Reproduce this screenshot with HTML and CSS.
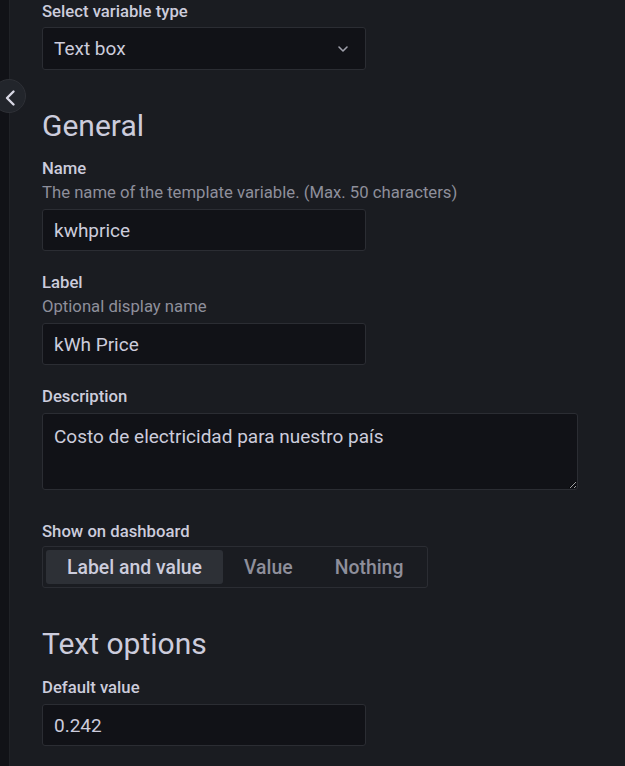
FILE: index.html
```html
<!DOCTYPE html>
<html lang="en">
<head>
<meta charset="utf-8">
<title>Variable editor</title>
<link rel="stylesheet" href="styles.css">
</head>
<body>
<div class="page">
  <div class="rail"></div>
  <button class="collapse" aria-label="Collapse">
    <svg width="32" height="32" viewBox="0 0 32 32"><path d="M20.5 11.5 L14 18 L20.5 24.5" fill="none" stroke="#d8d8e4" stroke-width="2.4" stroke-linecap="round" stroke-linejoin="round"/></svg>
  </button>
  <main class="main">
    <div class="field">
      <div class="label">Select variable type</div>
      <div class="select">
        <span>Text box</span>
        <svg class="caret" width="12" height="8" viewBox="0 0 12 8"><path d="M2 2 L6 6 L10 2" fill="none" stroke="#9fa0ab" stroke-width="1.6" stroke-linecap="round" stroke-linejoin="round"/></svg>
      </div>
    </div>

    <h2 class="heading">General</h2>

    <div class="field">
      <div class="label">Name</div>
      <div class="desc">The name of the template variable. (Max. 50 characters)</div>
      <input class="input" type="text" value="kwhprice">
    </div>

    <div class="field">
      <div class="label">Label</div>
      <div class="desc">Optional display name</div>
      <input class="input" type="text" value="kWh Price">
    </div>

    <div class="field">
      <div class="label">Description</div>
      <textarea class="textarea">Costo de electricidad para nuestro país</textarea>
    </div>

    <div class="field field-radio">
      <div class="label">Show on dashboard</div>
      <div class="radio">
        <span class="opt active">Label and value</span>
        <span class="opt">Value</span>
        <span class="opt">Nothing</span>
      </div>
    </div>

    <h2 class="heading heading-2">Text options</h2>

    <div class="field">
      <div class="label">Default value</div>
      <input class="input" type="text" value="0.242">
    </div>
  </main>
</div>
</body>
</html>
```
FILE: styles.css
```css
* { box-sizing: border-box; }
html, body {
  margin: 0;
  padding: 0;
  background: #1a1c21;
  color: #ccccdc;
  font-family: Roboto, "Liberation Sans", sans-serif;
  color-scheme: dark;
}
.page {
  position: relative;
  display: flex;
  min-height: 766px;
}
.rail {
  width: 10px;
  flex: 0 0 10px;
  background: #111217;
  border-right: 1px solid #202227;
}
.collapse {
  position: absolute;
  left: -8px;
  top: 79px;
  width: 34px;
  height: 34px;
  border-radius: 50%;
  background: #22252b;
  border: 1px solid #2e3036;
  padding: 0;
  display: block;
}
.collapse svg { display: block; }
.main {
  padding: 1px 0 0 32px;
  flex: 1;
}
.field { margin-bottom: 21px; }
.label {
  font-size: 16.7px;
  font-weight: 500;
  line-height: 22px;
  color: #ccccdc;
}
.desc {
  font-size: 16.7px;
  line-height: 22px;
  margin-top: 2px;
  color: #8e8f9b;
}
.select, .input, .textarea {
  display: block;
  margin-top: 5px;
  width: 324px;
  height: 43px;
  background: #111217;
  border: 1px solid #2b2d33;
  border-radius: 3px;
  color: #ccccdc;
  font-family: Roboto, "Liberation Sans", sans-serif;
  font-size: 19px;
  padding: 0 11px;
  outline: none;
}
.select {
  display: flex;
  align-items: center;
  justify-content: space-between;
  padding-right: 16px;
  margin-top: 4px;
}
.caret { margin-top: 1px; }
.input { height: 42px; }
.textarea {
  width: 536px;
  height: 77px;
  margin-top: 5px;
  padding: 11px 11px;
  line-height: 24px;
  resize: vertical;
}
.heading {
  font-size: 30px;
  font-weight: 400;
  line-height: 40px;
  margin: 36px 0 12px 0;
  color: #ccccdc;
}
.field-radio { margin-top: 31px; margin-bottom: 36px; }
.radio {
  display: inline-flex;
  margin-top: 3px;
  height: 42px;
  padding: 3px;
  border: 1px solid #2b2d33;
  border-radius: 3px;
}
.opt {
  display: flex;
  align-items: center;
  padding: 0 21px;
  font-size: 19.4px;
  font-weight: 500;
  color: #8e8f9b;
  border-radius: 3px;
}
.opt.active {
  background: #2d3036;
  color: #ccccdc;
}
.heading-2 { margin-top: 36px; margin-bottom: 13px; }
```
